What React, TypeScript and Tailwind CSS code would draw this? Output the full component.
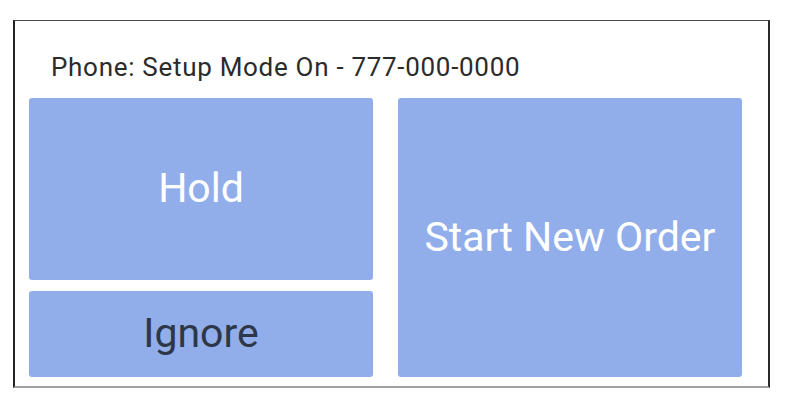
import React from "react";

const font = { fontFamily: "Roboto, 'Noto Sans', sans-serif" };

const App: React.FC = () => {
  return (
    <div className="w-[786px] h-[408px] bg-white pt-[20px] pl-[13px]" style={font}>
      <div className="w-[757px] h-[368px] border-t border-t-[#4a4a4a] border-l-2 border-l-[#222] border-r-2 border-r-[#2a2a2a] border-b-2 border-b-[#a0a0a0] bg-white flex flex-col">
        <div className="h-[77px] pl-[36px] pt-[31px]">
          <p className="text-[26px] leading-[30px] text-[#2b2b2b] tracking-[0.7px]">
            Phone: Setup Mode On - 777-000-0000
          </p>
        </div>
        <div className="flex gap-[25px] pl-[14px] h-[279px]">
          <div className="w-[344px] flex flex-col gap-[11px]">
            <button className="h-[182px] w-full rounded-[3px] bg-[#91aeeb] text-white text-[41px] flex items-center justify-center">
              Hold
            </button>
            <button className="h-[86px] w-full rounded-[3px] bg-[#91aeeb] text-[#2d3747] text-[41px] flex items-center justify-center">
              Ignore
            </button>
          </div>
          <button className="w-[344px] h-full rounded-[3px] bg-[#91aeeb] text-white text-[41px] flex items-center justify-center">
            Start New Order
          </button>
        </div>
      </div>
    </div>
  );
};

export default App;
